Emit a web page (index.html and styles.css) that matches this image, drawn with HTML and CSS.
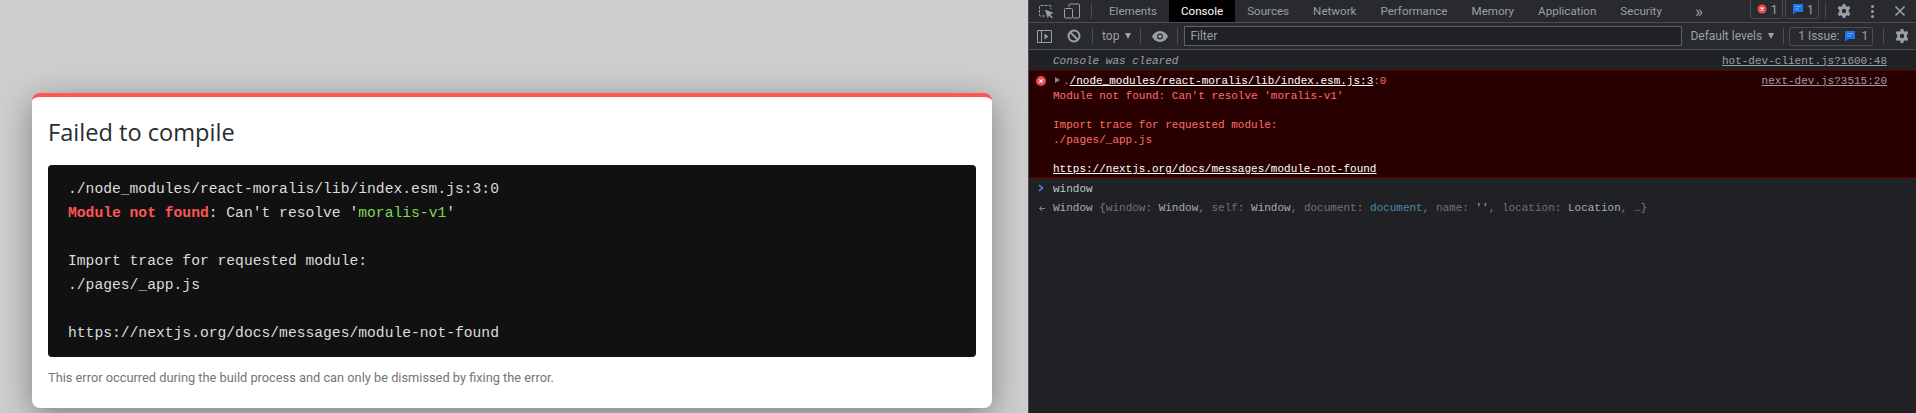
FILE: index.html
```html
<!DOCTYPE html>
<html lang="en">
<head>
<meta charset="utf-8">
<title>Failed to compile</title>
<link rel="stylesheet" href="styles.css">
</head>
<body>
<main class="page">
  <section class="card">
    <div class="card-body">
      <h4 class="title">Failed to compile</h4>
      <pre class="code">./node_modules/react-moralis/lib/index.esm.js:3:0
<span class="c-red">Module not found</span>: Can't resolve '<span class="c-green">moralis-v1</span>'

Import trace for requested module:
./pages/_app.js

https://nextjs.org/docs/messages/module-not-found</pre>
      <p class="note">This error occurred during the build process and can only be dismissed by fixing the error.</p>
    </div>
  </section>
</main>
<aside class="devtools">
  <nav class="tabbar">
    <div class="tools">
      <svg class="ico" viewBox="0 0 16 16" width="16" height="16"><path d="M7 13H2.500A1 1 0 0 1 1.500 12V3.500A1 1 0 0 1 2.500 2.500H12A1 1 0 0 1 13 3.500V6" fill="none" stroke="#9aa0a6" stroke-dasharray="3 1"/><path d="M7 6.500L15.500 10L12 11.500L15 14.500L14 15.500L11 12.500L9.800 15.500Z" fill="#9aa0a6"/></svg>
      <svg class="ico" viewBox="0 0 16 16" width="16" height="16"><path d="M5 4V2A1 1 0 0 1 6 1H14.500A1 1 0 0 1 15.500 2V14A1 1 0 0 1 14.500 15H9M1.500 5.500H7.500A1 1 0 0 1 8.500 6.500V14A1 1 0 0 1 7.500 15H1.500A1 1 0 0 1 .5 14V6.500A1 1 0 0 1 1.500 5.500Z" fill="none" stroke="#9aa0a6"/></svg>
    </div>
    <span class="sep tab-sep"></span>
    <div class="tabs">
      <a class="tab">Elements</a>
      <a class="tab tab-on">Console</a>
      <a class="tab">Sources</a>
      <a class="tab">Network</a>
      <a class="tab">Performance</a>
      <a class="tab">Memory</a>
      <a class="tab">Application</a>
      <a class="tab">Security</a>
      <a class="tab more">»</a>
    </div>
    <div class="status">
      <span class="badge badge-err"><svg viewBox="0 0 10 10" width="10" height="10"><circle cx="5" cy="5" r="4.500" fill="#ec4a50"/><path d="M3.500 3.500L6.500 6.500M6.500 3.500L3.500 6.500" stroke="#fff" stroke-width="1.200"/></svg>1</span>
      <span class="badge badge-msg"><svg viewBox="0 0 12 12" width="12" height="12"><path d="M1 1H11V9H4L1 11.500Z" fill="#1a73e8"/><path d="M3 3.500H9M3 6H7" stroke="#8ab4f8" stroke-width=".8"/></svg>1</span>
      <span class="sep status-sep"></span>
      <svg class="gear" viewBox="0 0 16 16" width="16" height="16"><path fill="#9aa0a6" fill-rule="evenodd" d="M6.700 1H9.300L9.700 3A5 5 0 0 1 11 3.800L13 3.100L14.300 5.400L12.700 6.700A5 5 0 0 1 12.700 9.300L14.300 10.600L13 12.900L11 12.200A5 5 0 0 1 9.700 13L9.300 15H6.700L6.300 13A5 5 0 0 1 5 12.200L3 12.900L1.700 10.600L3.300 9.300A5 5 0 0 1 3.300 6.700L1.700 5.400L3 3.100L5 3.800A5 5 0 0 1 6.300 3ZM8 5.800A2.200 2.200 0 1 0 8 10.200A2.200 2.200 0 1 0 8 5.800Z"/></svg>
      <span class="dots"><i></i><i></i><i></i></span>
      <svg class="close" viewBox="0 0 12 12" width="12" height="12"><path d="M1.500 1.500L10.500 10.500M10.500 1.500L1.500 10.500" stroke="#9aa0a6" stroke-width="1.600"/></svg>
    </div>
  </nav>
  <div class="toolbar">
    <svg class="tb-panel" viewBox="0 0 15 13" width="15" height="13"><path d="M.5 .5H14.500V12.500H.5ZM4.500 .5V12.500" fill="none" stroke="#9aa0a6"/><path d="M7.500 3.500L11.500 6.500L7.500 9.500Z" fill="#9aa0a6"/></svg>
    <svg class="tb-block" viewBox="0 0 14 14" width="14" height="14"><circle cx="7" cy="7" r="5.500" fill="none" stroke="#9aa0a6" stroke-width="2"/><path d="M3 3L11 11" stroke="#9aa0a6" stroke-width="2"/></svg>
    <span class="sep tb-sep1"></span>
    <span class="ctx">top<i class="arrow"></i></span>
    <span class="sep tb-sep2"></span>
    <svg class="tb-eye" viewBox="0 0 16 11" width="16" height="11"><path fill="#9aa0a6" fill-rule="evenodd" d="M8 0C4.500 0 1.500 2.200 0 5.500C1.500 8.800 4.500 11 8 11S14.500 8.800 16 5.500C14.500 2.200 11.500 0 8 0ZM8 2.500A3 3 0 1 1 8 8.500A3 3 0 1 1 8 2.500Z"/><circle cx="8" cy="5.500" r="1.800" fill="#9aa0a6"/></svg>
    <span class="sep tb-sep3"></span>
    <div class="filter">Filter</div>
    <span class="levels">Default levels<i class="arrow"></i></span>
    <span class="sep tb-sep4"></span>
    <span class="issues">1 Issue:<svg viewBox="0 0 12 12" width="12" height="12"><path d="M1 1H11V9H4L1 11.500Z" fill="#1a73e8"/><path d="M3 3.500H9M3 6H7" stroke="#8ab4f8" stroke-width=".8"/></svg>1</span>
    <span class="sep tb-sep5"></span>
    <svg class="gear tb-gear" viewBox="0 0 16 16" width="16" height="16"><path fill="#9aa0a6" fill-rule="evenodd" d="M6.700 1H9.300L9.700 3A5 5 0 0 1 11 3.800L13 3.100L14.300 5.400L12.700 6.700A5 5 0 0 1 12.700 9.300L14.300 10.600L13 12.900L11 12.200A5 5 0 0 1 9.700 13L9.300 15H6.700L6.300 13A5 5 0 0 1 5 12.200L3 12.900L1.700 10.600L3.300 9.300A5 5 0 0 1 3.300 6.700L1.700 5.400L3 3.100L5 3.800A5 5 0 0 1 6.300 3ZM8 5.800A2.200 2.200 0 1 0 8 10.200A2.200 2.200 0 1 0 8 5.800Z"/></svg>
  </div>
  <div class="console">
    <div class="row row-info"><em>Console was cleared</em><a class="src">hot-dev-client.js?1600:48</a></div>
    <div class="row-error">
      <div class="err-head"><span class="err-left"><svg class="err-ico" viewBox="0 0 10 10" width="10" height="10"><circle cx="5" cy="5" r="5" fill="#ec4a50"/><path d="M3.300 3.300L6.700 6.700M6.700 3.300L3.300 6.700" stroke="#fff" stroke-width="1.200"/></svg><i class="tri"></i>.<a class="err-link">/node_modules/react-moralis/lib/index.esm.js:3</a>:0</span><a class="src">next-dev.js?3515:20</a></div>
      <div class="err-line">Module not found: Can't resolve 'moralis-v1'</div>
      <div class="err-line">&nbsp;</div>
      <div class="err-line">Import trace for requested module:</div>
      <div class="err-line">./pages/_app.js</div>
      <div class="err-line">&nbsp;</div>
      <div class="err-line"><a class="err-link">https://nextjs.org/docs/messages/module-not-found</a></div>
    </div>
    <div class="row row-input"><svg class="prompt" viewBox="0 0 6 8" width="6" height="8"><path d="M1 1L4.500 4L1 7" fill="none" stroke="#4d90f0" stroke-width="1.500"/></svg><span>window</span></div>
    <div class="row row-result"><svg class="prompt" viewBox="0 0 7 7" width="7" height="7"><path d="M4 1L1.500 3.500L4 6M1.500 3.500H7" fill="none" stroke="#80868b"/></svg><span><span class="v-name">Window</span> <span class="v-brace">{</span><span class="v-key">window</span><span class="v-brace">: </span><span class="v-name">Window</span><span class="v-brace">, </span><span class="v-key">self</span><span class="v-brace">: </span><span class="v-name">Window</span><span class="v-brace">, </span><span class="v-key">document</span><span class="v-brace">: </span><span class="v-doc">document</span><span class="v-brace">, </span><span class="v-key">name</span><span class="v-brace">: </span><span class="v-name">''</span><span class="v-brace">, </span><span class="v-key">location</span><span class="v-brace">: </span><span class="v-name">Location</span><span class="v-brace">, …}</span></span></div>
  </div>
</aside>
</body>
</html>
```

FILE: styles.css
```css
* { box-sizing: border-box; }
html, body { margin: 0; height: 413px; overflow: hidden; }
body { display: flex; background: #cecece; font-family: "Open Sans", "Noto Sans", sans-serif; }

.page { flex: 0 0 1028px; padding: 93px 36px 5px 32px; overflow: hidden; }
.card {
  height: 315px;
  background: #fff;
  border-top: 4px solid #ff5555;
  border-radius: 8px;
  box-shadow: 0 8px 32px rgba(0, 0, 0, .38);
}
.card-body { padding: 16px; }
.title { margin: 0 0 14px; font-size: 23.600px; font-weight: 400; line-height: 38px; color: #292d31; }
.code {
  margin: 0;
  height: 192px;
  padding: 12px 20px;
  background: #111;
  border-radius: 4px;
  font: 14.670px/24px "Liberation Mono", monospace;
  color: #dcdcdc;
}
.c-red { color: #ff5555; font-weight: 700; }
.c-green { color: #7fd858; }
.note { margin: 12px 0 0; font-family: Roboto, sans-serif; font-size: 12.800px; line-height: 18px; color: #757575; }

.devtools { flex: 1; min-width: 0; display: flex; flex-direction: column; background: #202124; border-left: 1px solid #494c50; color: #9aa0a6; }
.tabbar, .toolbar { display: flex; align-items: center; background: #292a2d; border-bottom: 1px solid #494c50; font-family: Roboto, sans-serif; font-size: 12px; }
.tabbar { height: 23px; padding-left: 9px; }
.toolbar { height: 27px; padding-left: 8px; }
.tools { display: flex; gap: 10px; }
.ico { display: block; }
.sep { flex: none; width: 1px; height: 16px; background: #494c50; }
.tab-sep { margin: 0 5px 0 11px; }
.tabs { display: flex; height: 22px; }
.tab { display: flex; align-items: center; padding: 0 12px; font-size: 11.600px; color: #9aa0a6; white-space: nowrap; }
.tab-on { background: #000; color: #fff; }
.tab.more { margin-left: 9px; font-size: 17px; }
.status { display: flex; align-items: center; margin-left: auto; height: 22px; }
.badge { display: flex; align-items: center; gap: 3px; height: 19px; margin-top: -3px; margin-right: 2px; padding: 0 4px 0 6px; border: 1px solid #494c50; border-top: 0; border-radius: 0 0 3px 3px; font-size: 13px; color: #9aa0a6; }
.status-sep { margin: 0 10px 0 4px; }
.dots { display: flex; flex-direction: column; gap: 2px; margin: 0 20px 0 19px; }
.dots i { width: 3px; height: 3px; border-radius: 50%; background: #9aa0a6; }
.close { margin-right: 10px; }

.tb-panel { flex: none; }
.tb-block { flex: none; margin-left: 15px; }
.tb-sep1 { margin-left: 11px; }
.ctx { display: flex; align-items: center; margin-left: 9px; font-size: 12px; }
.arrow { width: 0; height: 0; margin-left: 6px; border: 3.500px solid transparent; border-top: 6px solid #9aa0a6; border-bottom: 0; }
.tb-sep2 { margin-left: 9px; }
.tb-eye { flex: none; margin-left: 11px; }
.tb-sep3 { margin-left: 9px; }
.filter { flex: none; width: 498px; height: 20px; margin-left: 6px; padding: 0 5px; border: 1px solid #5f6368; line-height: 18px; background: #202124; }
.levels { display: flex; align-items: center; margin-left: 8px; white-space: nowrap; }
.tb-sep4 { margin-left: 9px; }
.issues { display: flex; align-items: center; gap: 5px; height: 19px; margin-left: 5px; padding: 0 4px 0 8px; border: 1px solid #494c50; border-radius: 2px; white-space: nowrap; }
.tb-sep5 { margin-left: 10px; }
.tb-gear { margin-left: 10px; }

.console { flex: 1; font: 11px/14.670px "Liberation Mono", monospace; }
.row { display: flex; align-items: center; padding-left: 24px; padding-right: 29px; white-space: pre; }
.row-info { justify-content: space-between; height: 20px; padding-top: 2px; }
.row-info em { color: #9aa0a6; }
.src { color: #9aa0a6; text-decoration: underline; }
.row-error { height: 108px; padding: 3px 29px 0 24px; background: #290000; border-top: 1px solid #5c0000; border-bottom: 1px solid #5c0000; color: #ff6f6a; }
.err-head { display: flex; justify-content: space-between; }
.err-left { position: relative; white-space: pre; }
.err-ico { position: absolute; left: -17px; top: 2px; }
.tri { display: inline-block; vertical-align: 1px; width: 0; height: 0; margin: 0 3px 0 2px; border: 3px solid transparent; border-left: 5px solid #80868b; border-right: 0; }
.err-link { color: #fff; text-decoration: underline; }
.err-line { white-space: pre; }
.row-input { position: relative; height: 21px; padding-top: 1px; color: #bdc6cf; }
.row-result { position: relative; height: 18px; }
.prompt { position: absolute; left: 9px; top: 6px; }
.v-name { color: #a8abae; }
.v-brace { color: #7b7f83; }
.v-key { color: #6f7377; }
.v-doc { color: #4a8aa8; }
```
